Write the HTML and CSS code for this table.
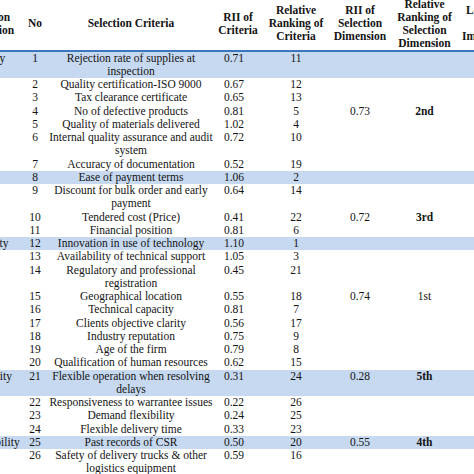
FILE: index.html
```html
<!DOCTYPE html>
<html>
<head>
<meta charset="utf-8">
<link rel="stylesheet" href="styles.css">
</head>
<body>
<div class="frame">
<table class="grid">
  <colgroup>
    <col class="c-dim"><col class="c-no"><col class="c-crit"><col class="c-rii"><col class="c-rrc"><col class="c-riisd"><col class="c-rrsd"><col class="c-last">
  </colgroup>
  <thead>
    <tr>
      <th>Selection<br>Dimension</th>
      <th>No</th>
      <th>Selection Criteria</th>
      <th>RII of Criteria</th>
      <th>Relative Ranking of Criteria</th>
      <th>RII of Selection Dimension</th>
      <th>Relative Ranking of Selection Dimension</th>
      <th>Level of Impact</th>
    </tr>
  </thead>
  <tbody>
    <tr class="hl"><td class="dim">Quality</td><td>1</td><td>Rejection rate of supplies at inspection</td><td class="rii">0.71</td><td>11</td><td></td><td></td><td></td></tr>
    <tr><td></td><td>2</td><td>Quality certification-ISO 9000</td><td class="rii">0.67</td><td>12</td><td></td><td></td><td></td></tr>
    <tr><td></td><td>3</td><td>Tax clearance certificate</td><td class="rii">0.65</td><td>13</td><td></td><td></td><td></td></tr>
    <tr><td></td><td>4</td><td>No of defective products</td><td class="rii">0.81</td><td>5</td><td>0.73</td><td class="b">2nd</td><td></td></tr>
    <tr><td></td><td>5</td><td>Quality of materials delivered</td><td class="rii">1.02</td><td>4</td><td></td><td></td><td></td></tr>
    <tr><td></td><td>6</td><td>Internal quality assurance and audit system</td><td class="rii">0.72</td><td>10</td><td></td><td></td><td></td></tr>
    <tr><td></td><td>7</td><td>Accuracy of documentation</td><td class="rii">0.52</td><td>19</td><td></td><td></td><td></td></tr>
    <tr class="hl"><td class="dim">Cost</td><td>8</td><td>Ease of payment terms</td><td class="rii">1.06</td><td>2</td><td></td><td></td><td></td></tr>
    <tr><td></td><td>9</td><td>Discount for bulk order and early payment</td><td class="rii">0.64</td><td>14</td><td></td><td></td><td></td></tr>
    <tr><td></td><td>10</td><td>Tendered cost (Price)</td><td class="rii">0.41</td><td>22</td><td>0.72</td><td class="b">3rd</td><td></td></tr>
    <tr><td></td><td>11</td><td>Financial position</td><td class="rii">0.81</td><td>6</td><td></td><td></td><td></td></tr>
    <tr class="hl"><td class="dim">Capacity</td><td>12</td><td>Innovation in use of technology</td><td class="rii">1.10</td><td>1</td><td></td><td></td><td></td></tr>
    <tr><td></td><td>13</td><td>Availability of technical support</td><td class="rii">1.05</td><td>3</td><td></td><td></td><td></td></tr>
    <tr><td></td><td>14</td><td>Regulatory and professional registration</td><td class="rii">0.45</td><td>21</td><td></td><td></td><td></td></tr>
    <tr><td></td><td>15</td><td>Geographical location</td><td class="rii">0.55</td><td>18</td><td>0.74</td><td>1st</td><td></td></tr>
    <tr><td></td><td>16</td><td>Technical capacity</td><td class="rii">0.81</td><td>7</td><td></td><td></td><td></td></tr>
    <tr><td></td><td>17</td><td>Clients objective clarity</td><td class="rii">0.56</td><td>17</td><td></td><td></td><td></td></tr>
    <tr><td></td><td>18</td><td>Industry reputation</td><td class="rii">0.75</td><td>9</td><td></td><td></td><td></td></tr>
    <tr><td></td><td>19</td><td>Age of the firm</td><td class="rii">0.79</td><td>8</td><td></td><td></td><td></td></tr>
    <tr><td></td><td>20</td><td>Qualification of human resources</td><td class="rii">0.62</td><td>15</td><td></td><td></td><td></td></tr>
    <tr class="hl"><td class="dim">Flexibility</td><td>21</td><td>Flexible operation when resolving delays</td><td class="rii">0.31</td><td>24</td><td>0.28</td><td class="b">5th</td><td></td></tr>
    <tr><td></td><td>22</td><td>Responsiveness to warrantee issues</td><td class="rii">0.22</td><td>26</td><td></td><td></td><td></td></tr>
    <tr><td></td><td>23</td><td>Demand flexibility</td><td class="rii">0.24</td><td>25</td><td></td><td></td><td></td></tr>
    <tr><td></td><td>24</td><td>Flexible delivery time</td><td class="rii">0.33</td><td>23</td><td></td><td></td><td></td></tr>
    <tr class="hl"><td class="dim">Sustainability</td><td>25</td><td>Past records of CSR</td><td class="rii">0.50</td><td>20</td><td>0.55</td><td class="b">4th</td><td></td></tr>
    <tr><td></td><td>26</td><td>Safety of delivery trucks &amp; other logistics equipment</td><td class="rii">0.59</td><td>16</td><td></td><td></td><td></td></tr>
  </tbody>
</table>
</div>
</body>
</html>
```
FILE: styles.css
```css
html, body {
  margin: 0;
  padding: 0;
  background: #ffffff;
}
body {
  width: 474px;
  height: 474px;
  overflow: hidden;
}
.frame {
  width: 474px;
  height: 474px;
  overflow: hidden;
}
.grid {
  margin-top: -2px;
  margin-left: -48px;
  border-collapse: collapse;
  table-layout: fixed;
  width: 546px;
  font-family: "Liberation Serif", "Times New Roman", serif;
  font-size: 11.5px;
  color: #141414;
}
.c-dim { width: 72px; }
.c-no { width: 22px; }
.c-crit { width: 170px; }
.c-rii { width: 44px; }
.c-rrc { width: 72px; }
.c-riisd { width: 56px; }
.c-rrsd { width: 73px; }
.c-last { width: 37px; }
.grid th {
  font-weight: bold;
  line-height: 12.9px;
  padding: 0;
  text-align: center;
  vertical-align: middle;
  border-bottom: 2px solid #3a78bb;
}
.grid td {
  padding: 0;
  line-height: 13.25px;
  text-align: center;
  vertical-align: top;
}
.grid td.rii {
  padding-right: 8px;
}
.grid td.b {
  font-weight: bold;
}
.grid tr.hl td {
  background: #c6d9f0;
}
.grid td.dim {
  white-space: nowrap;
}
```
